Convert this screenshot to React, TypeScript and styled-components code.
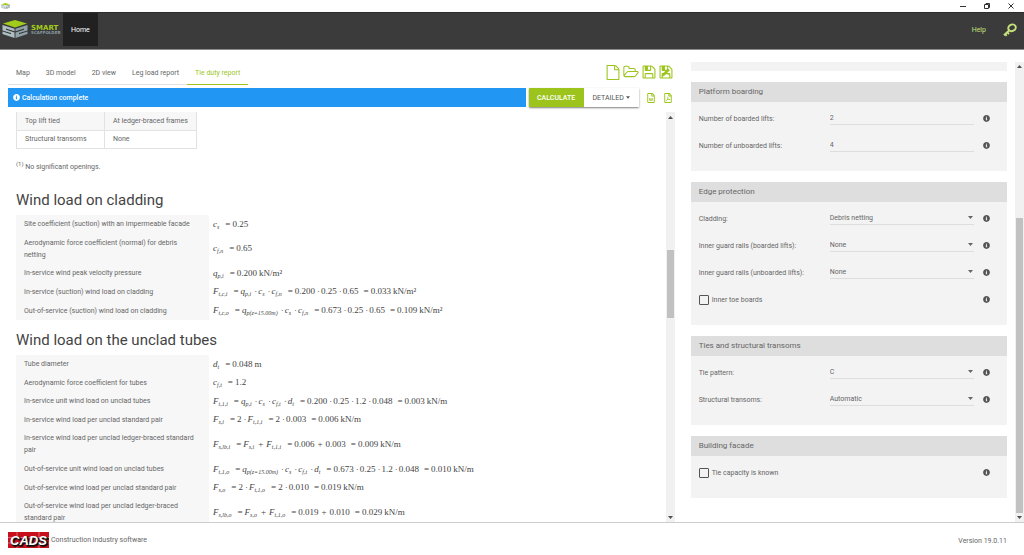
import React from "react";
import styled, { createGlobalStyle } from "styled-components";
import { FaInfoCircle, FaRegFilePdf, FaRegFileWord } from "react-icons/fa";

const green = "#9dc41c";

const GlobalStyle = createGlobalStyle`
  *, *::before, *::after { box-sizing: border-box; }
  body {
    margin: 0;
    background: #fff;
    color: #666;
    font-family: Roboto, "Liberation Sans", sans-serif;
    font-size: 7px;
    line-height: 12px;
  }
  button, input, select { font: inherit; color: inherit; }
  svg { display: block; }
`;

const Page = styled.div`
  display: grid;
  grid-template-rows: auto auto minmax(0, 1fr) auto;
  height: 100vh;
  overflow: hidden;
`;

/* ---------- window frame ---------- */

const TitleBar = styled.header`
  display: flex;
  justify-content: space-between;
  align-items: center;
  height: 12px;
  padding: 0 8px 0 1px;
`;

const WindowButtons = styled.div`
  display: flex;
  gap: 14px;
`;

const PlainButton = styled.button<{ $tint?: string }>`
  display: flex;
  align-items: center;
  justify-content: center;
  padding: 0;
  border: 0;
  background: none;
  color: ${(p) => p.$tint ?? "#333"};
  cursor: pointer;
`;

/* ---------- navigation ---------- */

const NavBar = styled.nav`
  display: flex;
  align-items: flex-start;
  height: 38px;
  padding-left: 2px;
  background: #3b3b3b;
  border-top: 1px solid #2c2c2c;
  border-bottom: 1px solid #8a8a8a;
`;

const Brand = styled.a`
  display: block;
  width: 61px;
  padding-top: 6px;
`;

const NavLink = styled.a<{ $active?: boolean }>`
  display: flex;
  align-items: center;
  height: 33px;
  padding: 0 8px;
  background: ${(p) => (p.$active ? "#212121" : "none")};
  color: ${(p) => (p.$active ? "#fff" : "#c5e17a")};
  text-decoration: none;
`;

const NavEnd = styled.div`
  display: flex;
  align-items: center;
  gap: 9px;
  margin-left: auto;
  padding-right: 7px;
`;

/* ---------- main area ---------- */

const Main = styled.main`
  display: grid;
  grid-template-columns: minmax(0, 2fr) minmax(0, 1fr);
  min-height: 0;
  padding-top: 12px;
`;

const ReportColumn = styled.section`
  display: flex;
  flex-direction: column;
  min-height: 0;
  padding: 0 8px;
`;

const TabRow = styled.div`
  display: flex;
  justify-content: space-between;
  height: 23px;
`;

const Tabs = styled.div`
  display: flex;
`;

const Tab = styled.button<{ $active?: boolean }>`
  padding: 0 8px;
  border: 0;
  border-bottom: 1px solid ${(p) => (p.$active ? green : "#e2e2e2")};
  background: none;
  color: ${(p) => (p.$active ? green : "#666")};
  white-space: nowrap;
`;

const FileActions = styled.div`
  display: flex;
  align-items: center;
  gap: 3px;
  padding: 0 2px 3px 0;
`;

const ActionRow = styled.div`
  display: flex;
  gap: 3px;
  height: 19px;
  margin: 3px 0 5px;
`;

const Alert = styled.div`
  display: flex;
  flex: 1;
  align-items: center;
  gap: 2px;
  padding: 0 5px;
  background: #2196f3;
  color: #fff;
  font-weight: 500;
`;

const ButtonGroup = styled.div`
  display: flex;
  border-radius: 1px;
  box-shadow: 0 1px 2px rgba(0, 0, 0, 0.5);
`;

const GroupButton = styled.button<{ $primary?: boolean }>`
  display: flex;
  align-items: center;
  justify-content: center;
  gap: 2px;
  width: 55px;
  padding: 0;
  border: 0;
  background: ${(p) => (p.$primary ? green : "#fff")};
  color: ${(p) => (p.$primary ? "#fff" : "#555")};
  font-weight: ${(p) => (p.$primary ? 500 : 400)};
`;

const ExportActions = styled.div`
  display: flex;
  align-items: center;
  gap: 7px;
  padding: 0 2px 0 4px;
`;

/* ---------- report ---------- */

const Scroller = styled.div`
  display: flex;
  flex: 1;
  min-height: 0;
`;

const ScrollBody = styled.div`
  display: flex;
  flex: 1;
  flex-direction: column;
  min-width: 0;
  overflow: hidden;
  padding: 0 8px;
`;

const Bar = styled.div`
  display: grid;
  flex: none;
  justify-items: center;
  width: 9px;
  background: #f1f1f1;
  color: #505050;
`;

const ReportBar = styled(Bar)`
  grid-template-rows: 10px 128fr 68fr 194fr 10px;
`;

const FormBar = styled(Bar)`
  grid-template-rows: 9px 147fr 295fr 9px;
`;

const Arrow = styled.span`
  align-self: center;
`;

const Thumb = styled.span`
  width: 7px;
  background: #c1c1c1;
`;

const SummaryTable = styled.table`
  align-self: flex-start;
  border-collapse: collapse;
  td {
    height: 18px;
    padding: 2px 8px;
    border: 1px solid #e2e2e2;
    white-space: nowrap;
  }
  td:first-child { width: 88px; }
  td:last-child { width: 92px; }
  tr:first-child td { border-top: 0; background: #f7f7f7; }
`;

const Note = styled.p`
  margin: 12px 0 7px;
  sup { font-size: 6px; line-height: 6px; }
`;

const Heading = styled.h2`
  margin: 8px 0 3px;
  color: #444;
  font-size: 15px;
  font-weight: 400;
  line-height: 24px;
`;

const ResultTable = styled.table<{ $minHeight: number }>`
  flex: none;
  height: ${(p) => p.$minHeight}px;
  border-collapse: collapse;
  th {
    width: 193px;
    padding: 3px 12px 3px 8px;
    background: #f7f7f7;
    font-weight: 400;
    text-align: left;
  }
  td { padding: 1px 4px; }
`;

const Formula = styled.span`
  color: #444;
  font-family: "Liberation Serif", serif;
  font-size: 9px;
  white-space: nowrap;
  i { font-style: italic; }
`;

const Sub = styled.sub`
  margin-right: 1px;
  font-size: 6px;
  font-style: italic;
  line-height: 1px;
  vertical-align: -2px;
`;

const Relation = styled.span`
  margin: 0 2px 0 5px;
`;

const Dot = styled.span`
  margin: 0 1px 0 2px;
`;

const Plus = styled.span`
  margin: 0 3px;
`;

const Unit = styled.span`
  margin-left: 2px;
`;

/* ---------- form ---------- */

const FormColumn = styled.section`
  display: flex;
  min-height: 0;
`;

const Cards = styled.form`
  display: flex;
  flex: 1;
  flex-direction: column;
  gap: 11px;
  min-width: 0;
  overflow: hidden;
  padding: 0 8px;
`;

const CardTail = styled.div`
  flex: none;
  height: 9px;
  background: #f3f3f3;
`;

const Card = styled.section`
  flex: none;
  padding-bottom: 12px;
  background: #f3f3f3;
`;

const CardTitle = styled.h3`
  margin: 0 0 3px;
  padding: 4px 8px;
  background: #dedede;
  color: #666;
  font-size: 8px;
  font-weight: 400;
  line-height: 12px;
`;

const Row = styled.div`
  display: grid;
  grid-template-columns: 131px minmax(0, 1fr) 24px;
  align-items: center;
  height: 27px;
  padding: 0 9px 0 8px;
`;

const Field = styled.div`
  position: relative;
  margin-bottom: 1px;
  border-bottom: 1px solid #ddd;
`;

const TextInput = styled.input`
  display: block;
  width: 100%;
  height: 12px;
  padding: 0;
  border: 0;
  background: none;
`;

const Select = styled.select`
  display: block;
  width: 100%;
  height: 12px;
  padding: 0;
  border: 0;
  background: none;
  appearance: none;
`;

const SelectCaret = styled.span`
  position: absolute;
  top: 4px;
  right: 1px;
  pointer-events: none;
`;

const CheckLabel = styled.label`
  display: flex;
  grid-column: 1 / 3;
  align-items: center;
  gap: 3px;
`;

const Checkbox = styled.input`
  width: 10px;
  height: 10px;
  margin: 0;
  border: 1px solid #555;
  border-radius: 1px;
  background: none;
  appearance: none;
`;

const InfoButton = styled(PlainButton)`
  justify-self: center;
`;

/* ---------- footer ---------- */

const Footer = styled.footer`
  display: flex;
  align-items: center;
  gap: 2px;
  height: 33px;
  padding: 2px 17px 0 8px;
  border-top: 1px solid #ccc;
`;

const Version = styled.span`
  margin-left: auto;
  padding-top: 2px;
`;

/* ---------- drawings ---------- */

const Blocks = ({ width, height }: { width: number; height: number }) => (
  <svg width={width} height={height} viewBox="0 0 26 18">
    <path d="M13 0 25 3.6 13 7.4 1 3.6Z" fill="#a2cc1c" />
    <path d="M.5 5 12.5 8.8V11.2L4 8.6V9.8L12.5 12.5V18L.5 14V11.6L9 14.3V13.1L.5 10.4Z" fill="#aebfc3" />
    <path d="M25.5 5 13.5 8.8V11.2L22 8.6V9.8L13.5 12.5V18L25.5 14V11.6L17 14.3V13.1L25.5 10.4Z" fill="#8fa3a8" />
  </svg>
);

const BrandLogo = () => (
  <svg width="60" height="22" viewBox="0 0 60 22" role="img" aria-label="Smart Scaffolder">
    <g transform="translate(0 1)">
      <Blocks width={26} height={18} />
    </g>
    <text x="29" y="11" fill="#a2cc1c" fontFamily="DejaVu Sans" fontWeight="700" fontSize="7">SMART</text>
    <text x="29" y="15" fill="#8a9da3" fontFamily="DejaVu Sans" fontWeight="700" fontSize="4">SCAFFOLDER</text>
  </svg>
);

const Key = () => (
  <svg width="14" height="14" viewBox="0 0 14 14" fill="none" stroke="#c5e17a" strokeWidth="2">
    <ellipse cx="9" cy="4.8" rx="3.8" ry="3.2" transform="rotate(-25 9 4.8)" />
    <path d="M6.4 7.2 1 12.2M4.2 9.2 6 11.2M2.2 11 3.6 12.8" />
  </svg>
);

const floppyPath =
  "M512 1536h768v-384h-768v384zm896 0h128v-896q0-14-10-38.5t-20-34.5l-281-281q-10-10-34-20t-39-10v416q0 40-28 68t-68 28h-576q-40 0-68-28t-28-68v-416h-128v1280h128v-416q0-40 28-68t68-28h832q40 0 68 28t28 68v416zm-384-928v-320q0-13-9.5-22.5t-22.5-9.5h-192q-13 0-22.5 9.5t-9.5 22.5v320q0 13 9.5 22.5t22.5 9.5h192q13 0 22.5-9.5t9.5-22.5zm640 32v928q0 40-28 68t-68 28h-1344q-40 0-68-28t-28-68v-1344q0-40 28-68t68-28h928q40 0 88 20t76 48l280 280q28 28 48 76t20 88z";

const NewFile = () => (
  <svg width="14" height="15" viewBox="64 0 1664 1792" fill="currentColor">
    <path d="M1596 380q28 28 48 76t20 88v1152q0 40-28 68t-68 28h-1344q-40 0-68-28t-28-68v-1600q0-40 28-68t68-28h896q40 0 88 20t76 48zm-444-244v376h376q-10-29-22-41l-313-313q-12-12-41-22zm384 1528v-1024h-416q-40 0-68-28t-28-68v-416h-768v1536h1280z" />
  </svg>
);

const OpenFolder = () => (
  <svg width="16" height="14" viewBox="20 128 1990 1536" fill="currentColor">
    <path d="M1845 931q0-35-53-35h-1088q-40 0-85.5 21.5t-71.5 52.5l-294 363q-18 24-18 40 0 35 53 35h1088q40 0 86-22t71-53l294-363q18-22 18-39zm-1141-163h768v-160q0-40-28-68t-68-28h-576q-40 0-68-28t-28-68v-64q0-40-28-68t-68-28h-320q-40 0-68 28t-28 68v853l256-315q44-53 116-87.5t140-34.5zm1269 163q0 62-46 120l-295 363q-43 53-116 87.5t-140 34.5h-1088q-92 0-158-66t-66-158v-960q0-92 66-158t158-66h320q92 0 158 66t66 158v32h544q92 0 158 66t66 158v160h192q54 0 99 24.5t67 70.5q15 32 15 68z" />
  </svg>
);

const Floppy = ({ edit }: { edit?: boolean }) => (
  <svg width="14" height="14" viewBox="64 64 1664 1664" fill="currentColor">
    <path d={floppyPath} />
    {edit && <path d="M420 1400 500 1140 1130 510 1310 690 680 1320ZM1000 1000 1400 1400" stroke="currentColor" strokeWidth="80" />}
  </svg>
);

const Caret = ({ up, size = 5 }: { up?: boolean; size?: number }) => (
  <svg width={size} height="3" viewBox="0 0 5 3" fill="currentColor">
    <path d={up ? "M0 3 2.5 0 5 3Z" : "M0 0H5L2.5 3Z"} />
  </svg>
);

const CadsLogo = () => (
  <svg width="41" height="16" viewBox="0 0 41 16" role="img" aria-label="CADS">
    <rect width="41" height="16" fill="#c8101c" />
    <path d="M0 5.5H41M0 11H41M9 0V5.5M31 0V5.5M4 5.5V11M37 5.5V11M9 11V16M31 11V16" stroke="#eba0a4" strokeWidth=".6" />
    <g fontFamily="Liberation Sans" fontWeight="700" fontStyle="italic" fontSize="13">
      <text x="3" y="14" fill="#111" stroke="#111" strokeWidth="1.4">CADS</text>
      <text x="2" y="13" fill="#fff">CADS</text>
    </g>
  </svg>
);

/* ---------- formulas ---------- */

/* Tokens are split on blanks; "F_t,c,i" is a symbol with a subscript. */
const Maths = ({ children }: { children: string }) => (
  <Formula>
    {children.split(" ").map((token, i) => {
      if (token === "=") return <Relation key={i}>=</Relation>;
      if (token === "·") return <Dot key={i}>·</Dot>;
      if (token === "+") return <Plus key={i}>+</Plus>;
      if (token.includes("_")) {
        const [base, sub] = token.split("_");
        return (
          <React.Fragment key={i}>
            <i>{base}</i>
            <Sub>{sub}</Sub>
          </React.Fragment>
        );
      }
      if (/^[km]/.test(token)) return <Unit key={i}>{token}</Unit>;
      return <span key={i}>{token}</span>;
    })}
  </Formula>
);

type Result = [label: string, formula: string];

const cladding: Result[] = [
  ["Site coefficient (suction) with an impermeable facade", "c_s = 0.25"],
  ["Aerodynamic force coefficient (normal) for debris netting", "c_f,n = 0.65"],
  ["In-service wind peak velocity pressure", "q_p,i = 0.200 kN/m²"],
  ["In-service (suction) wind load on cladding", "F_t,c,i = q_p,i · c_s · c_f,n = 0.200 · 0.25 · 0.65 = 0.033 kN/m²"],
  ["Out-of-service (suction) wind load on cladding", "F_t,c,o = q_p(z=15.00m) · c_s · c_f,n = 0.673 · 0.25 · 0.65 = 0.109 kN/m²"],
];

const tubes: Result[] = [
  ["Tube diameter", "d_t = 0.048 m"],
  ["Aerodynamic force coefficient for tubes", "c_f,t = 1.2"],
  ["In-service unit wind load on unclad tubes", "F_t,1,i = q_p,i · c_s · c_f,t · d_t = 0.200 · 0.25 · 1.2 · 0.048 = 0.003 kN/m"],
  ["In-service wind load per unclad standard pair", "F_s,i = 2 · F_t,1,i = 2 · 0.003 = 0.006 kN/m"],
  ["In-service wind load per unclad ledger-braced standard pair", "F_s,lb,i = F_s,i + F_t,1,i = 0.006 + 0.003 = 0.009 kN/m"],
  ["Out-of-service unit wind load on unclad tubes", "F_t,1,o = q_p(z=15.00m) · c_s · c_f,t · d_t = 0.673 · 0.25 · 1.2 · 0.048 = 0.010 kN/m"],
  ["Out-of-service wind load per unclad standard pair", "F_s,o = 2 · F_t,1,o = 2 · 0.010 = 0.019 kN/m"],
  ["Out-of-service wind load per unclad ledger-braced standard pair", "F_s,lb,o = F_s,o + F_t,1,o = 0.019 + 0.010 = 0.029 kN/m"],
];

const Results = ({ rows, minHeight }: { rows: Result[]; minHeight: number }) => (
  <ResultTable $minHeight={minHeight}>
    <tbody>
      {rows.map(([label, formula]) => (
        <tr key={label}>
          <th scope="row">{label}</th>
          <td><Maths>{formula}</Maths></td>
        </tr>
      ))}
    </tbody>
  </ResultTable>
);

/* ---------- form rows ---------- */

const Info = ({ about }: { about: string }) => (
  <InfoButton type="button" aria-label={`About ${about}`} $tint="#555">
    <FaInfoCircle size={7} />
  </InfoButton>
);

const NumberRow = ({ id, label, value }: { id: string; label: string; value: string }) => (
  <Row>
    <label htmlFor={id}>{label}</label>
    <Field><TextInput id={id} defaultValue={value} /></Field>
    <Info about={label} />
  </Row>
);

const SelectRow = ({ id, label, value }: { id: string; label: string; value: string }) => (
  <Row>
    <label htmlFor={id}>{label}</label>
    <Field>
      <Select id={id} defaultValue={value}><option>{value}</option></Select>
      <SelectCaret><Caret /></SelectCaret>
    </Field>
    <Info about={label} />
  </Row>
);

const CheckRow = ({ label }: { label: string }) => (
  <Row>
    <CheckLabel><Checkbox type="checkbox" />{label}</CheckLabel>
    <Info about={label} />
  </Row>
);

const tabs = ["Map", "3D model", "2D view", "Leg load report", "Tie duty report"];

export default function App() {
  return (
    <Page>
      <GlobalStyle />
      <TitleBar>
        <Blocks width={9} height={8} />
        <WindowButtons>
          <PlainButton aria-label="Minimise">
            <svg width="10" height="8" viewBox="0 0 10 8" stroke="currentColor"><path d="M2 4.5H8" /></svg>
          </PlainButton>
          <PlainButton aria-label="Restore">
            <svg width="10" height="8" viewBox="0 0 10 8" fill="none" stroke="currentColor"><path d="M2.5 2.5H6.5V6.5H2.5ZM4 2.5V1.5H7.5V5.5H6.5" /></svg>
          </PlainButton>
          <PlainButton aria-label="Close">
            <svg width="10" height="8" viewBox="0 0 10 8" stroke="currentColor"><path d="M2.5 1.5 7.5 6.5M7.5 1.5 2.5 6.5" /></svg>
          </PlainButton>
        </WindowButtons>
      </TitleBar>

      <NavBar>
        <Brand href="#home"><BrandLogo /></Brand>
        <NavLink href="#home" $active>Home</NavLink>
        <NavEnd>
          <NavLink href="#help">Help</NavLink>
          <PlainButton aria-label="Licence key"><Key /></PlainButton>
        </NavEnd>
      </NavBar>

      <Main>
        <ReportColumn>
          <TabRow>
            <Tabs role="tablist">
              {tabs.map((tab, i) => (
                <Tab key={tab} role="tab" aria-selected={i === 4} $active={i === 4}>{tab}</Tab>
              ))}
            </Tabs>
            <FileActions>
              <PlainButton $tint={green} aria-label="New"><NewFile /></PlainButton>
              <PlainButton $tint={green} aria-label="Open"><OpenFolder /></PlainButton>
              <PlainButton $tint={green} aria-label="Save"><Floppy /></PlainButton>
              <PlainButton $tint={green} aria-label="Save as"><Floppy edit /></PlainButton>
            </FileActions>
          </TabRow>

          <ActionRow>
            <Alert role="status"><FaInfoCircle size={7} />Calculation complete</Alert>
            <ButtonGroup>
              <GroupButton $primary>CALCULATE</GroupButton>
              <GroupButton>DETAILED<Caret size={4} /></GroupButton>
            </ButtonGroup>
            <ExportActions>
              <PlainButton $tint={green} aria-label="Export to Word"><FaRegFileWord size={10} /></PlainButton>
              <PlainButton $tint={green} aria-label="Export to PDF"><FaRegFilePdf size={10} /></PlainButton>
            </ExportActions>
          </ActionRow>

          <Scroller>
            <ScrollBody>
              <SummaryTable>
                <tbody>
                  <tr><td>Top lift tied</td><td>At ledger-braced frames</td></tr>
                  <tr><td>Structural transoms</td><td>None</td></tr>
                </tbody>
              </SummaryTable>
              <Note><sup>(1)</sup> No significant openings.</Note>
              <Heading>Wind load on cladding</Heading>
              <Results rows={cladding} minHeight={105} />
              <Heading>Wind load on the unclad tubes</Heading>
              <Results rows={tubes} minHeight={173} />
            </ScrollBody>
            <ReportBar aria-hidden="true">
              <Arrow><Caret up /></Arrow>
              <span />
              <Thumb />
              <span />
              <Arrow><Caret /></Arrow>
            </ReportBar>
          </Scroller>
        </ReportColumn>

        <FormColumn>
          <Cards>
            <CardTail />
            <Card>
              <CardTitle>Platform boarding</CardTitle>
              <NumberRow id="boarded" label="Number of boarded lifts:" value="2" />
              <NumberRow id="unboarded" label="Number of unboarded lifts:" value="4" />
            </Card>
            <Card>
              <CardTitle>Edge protection</CardTitle>
              <SelectRow id="cladding" label="Cladding:" value="Debris netting" />
              <SelectRow id="rails-boarded" label="Inner guard rails (boarded lifts):" value="None" />
              <SelectRow id="rails-unboarded" label="Inner guard rails (unboarded lifts):" value="None" />
              <CheckRow label="Inner toe boards" />
            </Card>
            <Card>
              <CardTitle>Ties and structural transoms</CardTitle>
              <SelectRow id="tie-pattern" label="Tie pattern:" value="C" />
              <SelectRow id="transoms" label="Structural transoms:" value="Automatic" />
            </Card>
            <Card>
              <CardTitle>Building facade</CardTitle>
              <CheckRow label="Tie capacity is known" />
            </Card>
          </Cards>
          <FormBar aria-hidden="true">
            <Arrow><Caret up /></Arrow>
            <span />
            <Thumb />
            <Arrow><Caret /></Arrow>
          </FormBar>
        </FormColumn>
      </Main>

      <Footer>
        <CadsLogo />
        Construction industry software
        <Version>Version 19.0.11</Version>
      </Footer>
    </Page>
  );
}
